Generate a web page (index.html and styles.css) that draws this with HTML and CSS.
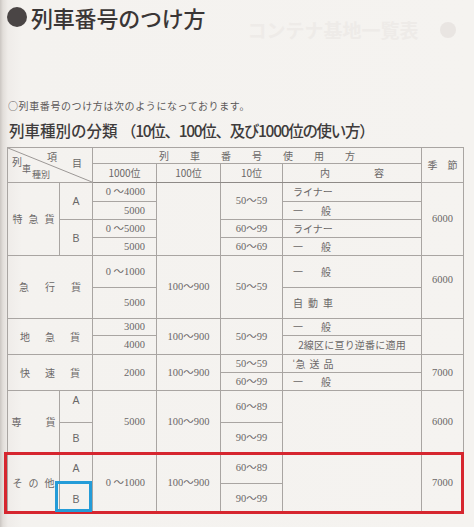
FILE: index.html
```html
<!DOCTYPE html>
<html lang="ja">
<head>
<meta charset="utf-8">
<title>列車番号のつけ方</title>
<link rel="stylesheet" href="styles.css">
</head>
<body>
<div class="page">
  <header class="top">
    <h1 class="title"><span class="dot"></span>列車番号のつけ方</h1>
    <div class="ghost">コンテナ基地一覧表<span class="ghost-dot"></span></div>
  </header>
  <p class="intro">○列車番号のつけ方は次のようになっております。</p>
  <h2 class="heading">列車種別の分類 <span class="paren">（10位、100位、及び1000位の使い方）</span></h2>
  <div class="table-wrap">
    <table class="tbl">
      <colgroup>
        <col class="c1"><col class="c2"><col class="c3"><col class="c4"><col class="c5"><col class="c6"><col class="c7">
      </colgroup>
      <tr class="h1">
        <th class="diag" colspan="2" rowspan="2">
          <svg class="diag-line" viewBox="0 0 100 100" preserveAspectRatio="none"><line x1="0" y1="0" x2="100" y2="100" stroke="#9c9896" stroke-width="1" vector-effect="non-scaling-stroke"/></svg>
          <span class="dg d-kou">項</span>
          <span class="dg d-moku">目</span>
          <span class="dg d-retsu">列</span>
          <span class="dg d-sha">車</span>
          <span class="dg d-shu">種別</span>
        </th>
        <th colspan="4" class="head-main"><span class="sp ls21">列車番号使用方</span></th>
        <th rowspan="2"><span class="sp ls10">季節</span></th>
      </tr>
      <tr class="h2">
        <th>1000位</th>
        <th>100位</th>
        <th>10位</th>
        <th><span class="sp ls44">内容</span></th>
      </tr>

      <tr class="r19">
        <td rowspan="4"><span class="sp ls6">特急貨</span></td>
        <td rowspan="2" class="ab">A</td>
        <td class="n k">0 ～4000</td>
        <td rowspan="4"></td>
        <td rowspan="2" class="n">50～59</td>
        <td class="c">ライナー</td>
        <td rowspan="4" class="n">6000</td>
      </tr>
      <tr class="r18">
        <td class="n k">5000</td>
        <td class="c"><span class="sp ls18">一般</span></td>
      </tr>
      <tr class="r18">
        <td rowspan="2" class="ab">B</td>
        <td class="n k">0 ～5000</td>
        <td class="n">60～99</td>
        <td class="c">ライナー</td>
      </tr>
      <tr class="r18">
        <td class="n k">5000</td>
        <td class="n">60～69</td>
        <td class="c"><span class="sp ls18">一般</span></td>
      </tr>

      <tr class="r32">
        <td colspan="2" rowspan="2"><span class="sp ls16">急行貨</span></td>
        <td class="n k">0 ～1000</td>
        <td rowspan="2" class="n">100～900</td>
        <td rowspan="2" class="n">50～59</td>
        <td class="c"><span class="sp ls18">一般</span></td>
        <td rowspan="2" class="n up">6000</td>
      </tr>
      <tr class="r31">
        <td class="n k">5000</td>
        <td class="c"><span class="sp ls5">自動車</span></td>
      </tr>

      <tr class="r17">
        <td colspan="2" rowspan="2"><span class="sp ls15">地急貨</span></td>
        <td class="n k">3000</td>
        <td rowspan="2" class="n">100～900</td>
        <td rowspan="2" class="n">50～99</td>
        <td class="c"><span class="sp ls18">一般</span></td>
        <td rowspan="2"></td>
      </tr>
      <tr class="r19">
        <td class="n k">4000</td>
        <td class="cc">2線区に亘り逆番に適用</td>
      </tr>

      <tr class="r18">
        <td colspan="2" rowspan="2"><span class="sp ls15">快速貨</span></td>
        <td rowspan="2" class="n k">2000</td>
        <td rowspan="2" class="n">100～900</td>
        <td class="n">50～59</td>
        <td class="c"><span class="mark">ˈ</span><span class="sp ls4">急送品</span></td>
        <td rowspan="2" class="n">7000</td>
      </tr>
      <tr class="r18">
        <td class="n">60～99</td>
        <td class="c"><span class="sp ls18">一般</span></td>
      </tr>

      <tr class="r32">
        <td rowspan="2"><span class="sp ls24">専貨</span></td>
        <td class="ab hi">A</td>
        <td rowspan="2" class="n k">5000</td>
        <td rowspan="2" class="n">100～900</td>
        <td class="n">60～89</td>
        <td rowspan="2"></td>
        <td rowspan="2" class="n">6000</td>
      </tr>
      <tr class="r30">
        <td class="ab">B</td>
        <td class="n">90～99</td>
      </tr>

      <tr class="r31">
        <td rowspan="2"><span class="sp ls6">その他</span></td>
        <td class="ab">A</td>
        <td rowspan="2" class="n k">0 ～1000</td>
        <td rowspan="2" class="n">100～900</td>
        <td class="n">60～89</td>
        <td rowspan="2"></td>
        <td rowspan="2" class="n">7000</td>
      </tr>
      <tr class="r30">
        <td class="ab">B</td>
        <td class="n">90～99</td>
      </tr>
    </table>
    <div class="mark-red"></div>
    <div class="mark-blue"></div>
  </div>
</div>
</body>
</html>
```

FILE: styles.css
```css
* { box-sizing: border-box; }
html, body { margin: 0; padding: 0; }
body {
  width: 474px;
  height: 527px;
  overflow: hidden;
  background: linear-gradient(to right, #cbc6c2 0, #e2deda 3px, #efece9 8px, #f4f2ef 22px, #f5f3f0 100%);
  font-family: "Noto Sans CJK JP", "Noto Sans", sans-serif;
  color: #6a6767;
}
.page {
  padding: 4px 0 0 7px;
  display: flex;
  flex-direction: column;
}
.top {
  display: flex;
  align-items: flex-start;
  height: 26px;
}
.title {
  margin: 0;
  display: flex;
  align-items: center;
  font-size: 22px;
  line-height: 26px;
  font-weight: 500;
  color: #3a3636;
  letter-spacing: -0.2px;
}
.dot {
  width: 20px;
  height: 20px;
  border-radius: 50%;
  background: #4a4545;
  margin-right: 4px;
}
.ghost {
  margin: 14px 0 0 42px;
  display: flex;
  align-items: center;
  font-size: 19px;
  line-height: 24px;
  font-weight: 700;
  color: #eeebe8;
  white-space: nowrap;
}
.ghost-dot {
  width: 16px;
  height: 16px;
  border-radius: 50%;
  background: #e9e5e2;
  margin-left: 22px;
}
.intro {
  margin: 69px 0 0 1px;
  font-size: 10px;
  line-height: 14px;
  letter-spacing: 0.6px;
  color: #5c5959;
}
.heading {
  margin: 7px 0 0 2px;
  font-size: 15.5px;
  line-height: 20px;
  font-weight: 500;
  color: #3f3c3c;
  white-space: nowrap;
}
.paren { letter-spacing: -1.3px; }
.table-wrap {
  position: relative;
  margin-top: 7px;
  width: 456px;
}
.tbl {
  border-collapse: collapse;
  table-layout: fixed;
  width: 456px;
  border: 1px solid #8e8a87;
}
.c1 { width: 52px; }
.c2 { width: 33px; }
.c3 { width: 64px; }
.c4 { width: 64px; }
.c5 { width: 62px; }
.c6 { width: 139px; }
.c7 { width: 42px; }
.tbl th, .tbl td {
  border: 1px solid #a9a5a2;
  padding: 0;
  font-size: 10px;
  line-height: 12px;
  font-weight: 400;
  text-align: center;
  vertical-align: middle;
  color: #6a6767;
  white-space: nowrap;
}
.h1 { height: 16px; }
.h2 { height: 19px; }
.h2 th { border-bottom-color: #8e8a87; }
.r17 { height: 17px; }
.r18 { height: 18px; }
.r19 { height: 19px; }
.r30 { height: 30px; }
.r31 { height: 31px; }
.r32 { height: 32px; }

.diag { position: relative; }
.diag-line {
  position: absolute;
  left: 0; top: 0;
  width: 100%;
  height: 100%;
}
.dg {
  position: absolute;
  font-size: 10px;
  line-height: 10px;
  color: #6a6767;
}
.d-kou { left: 39px; top: 4px; }
.d-moku { left: 64px; top: 10px; }
.d-retsu { left: 4px; top: 9px; }
.d-sha { left: 14px; top: 16px; font-size: 9px; }
.d-shu { left: 24px; top: 22px; font-size: 9px; }

.head-main { padding-right: 18px; }
.sp { display: inline-block; }
.ls4 { letter-spacing: 4px; margin-right: -4px; }
.ls5 { letter-spacing: 5px; margin-right: -5px; }
.ls6 { letter-spacing: 6px; margin-right: -6px; }
.ls10 { letter-spacing: 10px; margin-right: -10px; }
.ls15 { letter-spacing: 15px; margin-right: -15px; }
.ls16 { letter-spacing: 16px; margin-right: -16px; }
.ls18 { letter-spacing: 18px; margin-right: -18px; }
.ls21 { letter-spacing: 21px; margin-right: -21px; }
.ls24 { letter-spacing: 24px; margin-right: -24px; }
.ls44 { letter-spacing: 44px; margin-right: -44px; }

.tbl td.n {
  font-family: "Liberation Serif", "Noto Sans CJK JP", serif;
  font-size: 10.5px;
}
.tbl td.k { text-align: right; padding-right: 11px; }
.tbl td.c { text-align: left; padding-left: 10px; }
.tbl td.cc { text-align: center; letter-spacing: 0.2px; }
.tbl td.ab {
  font-family: "Liberation Sans", sans-serif;
  font-size: 10.5px;
}
.tbl td.hi { padding-bottom: 14px; }
.tbl td.up { padding-bottom: 14px; }
.mark { font-size: 9px; margin-right: 1px; vertical-align: top; }

.mark-red {
  position: absolute;
  left: -3px;
  top: 305px;
  width: 460px;
  height: 62px;
  border: 3px solid #d6262f;
}
.mark-blue {
  position: absolute;
  left: 48px;
  top: 334px;
  width: 37px;
  height: 31px;
  border: 3px solid #249cd8;
}
```
